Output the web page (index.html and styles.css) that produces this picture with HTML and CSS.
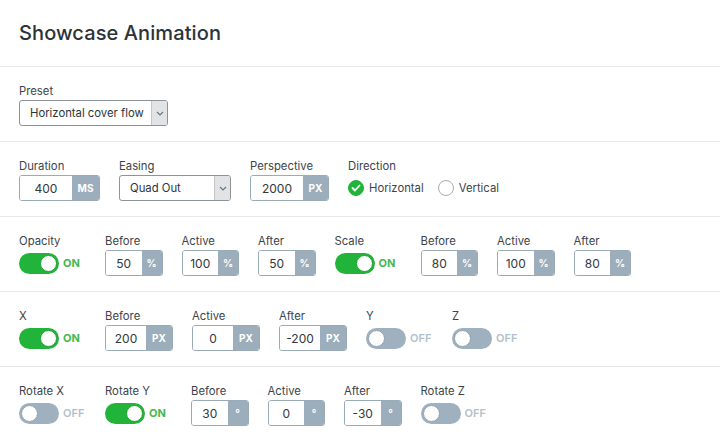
FILE: index.html
```html
<!DOCTYPE html>
<html>
<head>
<meta charset="utf-8">
<link rel="stylesheet" href="styles.css">
</head>
<body>
<div class="panel">
  <div class="header"><h1 class="title">Showcase Animation</h1></div>

  <div class="section">
    <div class="field">
      <div class="label">Preset</div>
      <div class="select w-preset"><span class="sel-text">Horizontal cover flow</span><span class="sel-arrow"><svg width="8" height="5" viewBox="0 0 8 5"><path d="M1 1l3 3 3-3" fill="none" stroke="#6b7379" stroke-width="1.1"/></svg></span></div>
    </div>
  </div>

  <div class="section">
    <div class="field">
      <div class="label">Duration</div>
      <div class="num w-dur"><span class="val">400</span><span class="unit">MS</span></div>
    </div>
    <div class="field">
      <div class="label">Easing</div>
      <div class="select w-ease"><span class="sel-text">Quad Out</span><span class="sel-arrow"><svg width="8" height="5" viewBox="0 0 8 5"><path d="M1 1l3 3 3-3" fill="none" stroke="#6b7379" stroke-width="1.1"/></svg></span></div>
    </div>
    <div class="field">
      <div class="label">Perspective</div>
      <div class="num w-persp"><span class="val">2000</span><span class="unit">PX</span></div>
    </div>
    <div class="field">
      <div class="label">Direction</div>
      <div class="radios">
        <span class="radio"><span class="dot on"><svg width="10" height="8" viewBox="0 0 10 8"><path d="M1.5 4l2.5 2.5 4.5-5" fill="none" stroke="#fff" stroke-width="1.8" stroke-linecap="round" stroke-linejoin="round"/></svg></span>Horizontal</span>
        <span class="radio"><span class="dot"></span>Vertical</span>
      </div>
    </div>
  </div>

  <div class="section">
    <div class="field tf">
      <div class="label">Opacity</div>
      <div class="toggle-row"><span class="toggle on"><span class="knob"></span></span><span class="tstate on">ON</span></div>
    </div>
    <div class="field"><div class="label">Before</div><div class="num w-pct"><span class="val">50</span><span class="unit">%</span></div></div>
    <div class="field"><div class="label">Active</div><div class="num w-pct"><span class="val">100</span><span class="unit">%</span></div></div>
    <div class="field"><div class="label">After</div><div class="num w-pct"><span class="val">50</span><span class="unit">%</span></div></div>
    <div class="field tf">
      <div class="label">Scale</div>
      <div class="toggle-row"><span class="toggle on"><span class="knob"></span></span><span class="tstate on">ON</span></div>
    </div>
    <div class="field"><div class="label">Before</div><div class="num w-pct"><span class="val">80</span><span class="unit">%</span></div></div>
    <div class="field"><div class="label">Active</div><div class="num w-pct"><span class="val">100</span><span class="unit">%</span></div></div>
    <div class="field"><div class="label">After</div><div class="num w-pct"><span class="val">80</span><span class="unit">%</span></div></div>
  </div>

  <div class="section">
    <div class="field tf">
      <div class="label">X</div>
      <div class="toggle-row"><span class="toggle on"><span class="knob"></span></span><span class="tstate on">ON</span></div>
    </div>
    <div class="field"><div class="label">Before</div><div class="num w-px"><span class="val">200</span><span class="unit">PX</span></div></div>
    <div class="field"><div class="label">Active</div><div class="num w-px"><span class="val">0</span><span class="unit">PX</span></div></div>
    <div class="field"><div class="label">After</div><div class="num w-px"><span class="val">-200</span><span class="unit">PX</span></div></div>
    <div class="field tf">
      <div class="label">Y</div>
      <div class="toggle-row"><span class="toggle"><span class="knob"></span></span><span class="tstate">OFF</span></div>
    </div>
    <div class="field tf">
      <div class="label">Z</div>
      <div class="toggle-row"><span class="toggle"><span class="knob"></span></span><span class="tstate">OFF</span></div>
    </div>
  </div>

  <div class="section">
    <div class="field tf">
      <div class="label">Rotate X</div>
      <div class="toggle-row"><span class="toggle"><span class="knob"></span></span><span class="tstate">OFF</span></div>
    </div>
    <div class="field tf">
      <div class="label">Rotate Y</div>
      <div class="toggle-row"><span class="toggle on"><span class="knob"></span></span><span class="tstate on">ON</span></div>
    </div>
    <div class="field"><div class="label">Before</div><div class="num w-pct"><span class="val">30</span><span class="unit">°</span></div></div>
    <div class="field"><div class="label">Active</div><div class="num w-pct"><span class="val">0</span><span class="unit">°</span></div></div>
    <div class="field"><div class="label">After</div><div class="num w-pct"><span class="val">-30</span><span class="unit">°</span></div></div>
    <div class="field tf">
      <div class="label">Rotate Z</div>
      <div class="toggle-row"><span class="toggle"><span class="knob"></span></span><span class="tstate">OFF</span></div>
    </div>
  </div>
</div>
</body>
</html>
```

FILE: styles.css
```css
* { box-sizing: border-box; }
html, body { margin: 0; padding: 0; background: #fff; }
body { font-family: Inter, "Noto Sans", sans-serif; color: #3c434a; }

.panel { width: 720px; }

.header {
  height: 67px;
  border-bottom: 1px solid #e6e8ea;
  padding: 20px 19px 0;
}
.title {
  margin: 0;
  font-size: 20px;
  font-weight: 500;
  line-height: 26px;
  color: #2c3338;
  letter-spacing: 0.1px;
}

.section {
  display: flex;
  gap: 0 19px;
  height: 75px;
  padding: 17px 19px 0;
  border-bottom: 1px solid #e6e8ea;
}

.field { display: flex; flex-direction: column; }
.tf { width: 67px; }

.label {
  font-size: 11.3px;
  line-height: 14px;
  height: 14px;
  margin-bottom: 2px;
  color: #3c434a;
  white-space: nowrap;
}

/* number inputs with unit */
.num {
  display: flex;
  height: 26px;
  border: 1px solid #9aabb8;
  border-radius: 3px;
  overflow: hidden;
}
.num .val {
  flex: 1;
  background: #fff;
  font-size: 12px;
  color: #32373c;
  display: flex;
  align-items: center;
  justify-content: center;
}
.num .unit {
  background: #9cadbb;
  color: #fff;
  font-weight: 700;
  font-size: 10px;
  display: flex;
  align-items: center;
  justify-content: center;
}
.w-dur { width: 81px; }
.w-dur .unit { width: 27px; }
.w-persp { width: 79px; }
.w-persp .unit { width: 25px; }
.w-pct { width: 57.5px; }
.w-pct .unit { width: 20px; }
.w-px { width: 68px; }
.w-px .unit { width: 26px; }

/* selects */
.select {
  display: flex;
  height: 26px;
  border: 1px solid #8c9399;
  border-radius: 3px;
  overflow: hidden;
  background: #fff;
}
.sel-text {
  flex: 1;
  display: flex;
  align-items: center;
  padding-left: 10px;
  font-size: 11.3px;
  color: #2c3338;
  white-space: nowrap;
}
.sel-arrow {
  width: 16px;
  background: #e2e3e4;
  border-left: 1px solid #c5c8cb;
  display: flex;
  align-items: center;
  justify-content: center;
}
.w-preset { width: 149px; }
.w-ease { width: 112px; }

/* radios */
.radios {
  display: flex;
  align-items: center;
  height: 26px;
  gap: 14px;
  font-size: 11.3px;
  color: #3c434a;
}
.radio { display: flex; align-items: center; gap: 5px; }
.dot {
  width: 16px; height: 16px;
  border-radius: 50%;
  border: 1.5px solid #a7acb0;
  display: flex; align-items: center; justify-content: center;
  background: #fff;
}
.dot.on { background: #22b33a; border-color: #22b33a; }

/* toggles */
.toggle-row { display: flex; align-items: center; height: 26px; gap: 4px; }
.toggle {
  width: 40px; height: 21px;
  border-radius: 11px;
  background: #9fb1bf;
  display: flex;
  align-items: center;
  padding: 0 2px;
}
.toggle .knob {
  width: 17px; height: 17px;
  border-radius: 50%;
  background: #fff;
  border: 1px solid #8fa2b1;
}
.toggle.on { background: #22b33a; justify-content: flex-end; }
.toggle.on .knob { border-color: #1f9f33; }
.tstate {
  font-size: 11px;
  color: #b3c0ca;
  font-weight: 600;
}
.tstate.on { color: #46b84f; font-weight: 700; }
```
